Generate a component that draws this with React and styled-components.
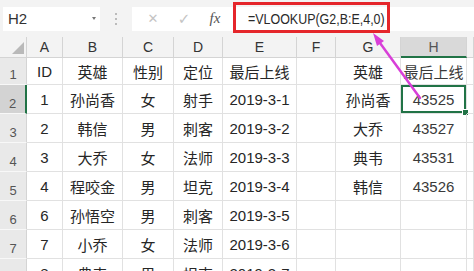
import styled, { createGlobalStyle } from "styled-components";

const GlobalStyle = createGlobalStyle`
  html, body {
    margin: 0;
    padding: 0;
    background: #ffffff;
  }
  body {
    font-family: "Liberation Sans", "Noto Sans CJK SC", sans-serif;
    color: #262626;
  }
`;

const columns = ["A", "B", "C", "D", "E", "F", "G", "H", ""];

const rows = [
  ["ID", "英雄", "性别", "定位", "最后上线", "", "英雄", "最后上线", ""],
  ["1", "孙尚香", "女", "射手", "2019-3-1", "", "孙尚香", "43525", ""],
  ["2", "韩信", "男", "刺客", "2019-3-2", "", "大乔", "43527", ""],
  ["3", "大乔", "女", "法师", "2019-3-3", "", "典韦", "43531", ""],
  ["4", "程咬金", "男", "坦克", "2019-3-4", "", "韩信", "43526", ""],
  ["6", "孙悟空", "男", "刺客", "2019-3-5", "", "", "", ""],
  ["7", "小乔", "女", "法师", "2019-3-6", "", "", "", ""],
  ["8", "典韦", "男", "坦克", "2019-3-7", "", "", "", ""],
];

const App = () => {
  return (
    <Page>
      <GlobalStyle />
      <Toolbar>
        <NameBox>
          H2
          <DropArrow />
        </NameBox>
        <Grip>
          <span />
          <span />
          <span />
        </Grip>
        <FxButtons>
          <ToolGlyph>✕</ToolGlyph>
          <ToolGlyph $size={15}>✓</ToolGlyph>
          <FxLabel>fx</FxLabel>
        </FxButtons>
        <FormulaInput>
          <FormulaText>=VLOOKUP(G2,B:E,4,0)</FormulaText>
        </FormulaInput>
      </Toolbar>

      <Sheet>
        <Corner>
          <CornerTriangle />
        </Corner>
        {columns.map((c, i) => (
          <ColHead key={"c" + i} $active={c === "H"}>
            {c}
          </ColHead>
        ))}
        {rows.map((row, r) => (
          <Row key={"r" + r}>
            <RowHead $active={r === 1}>{r + 1}</RowHead>
            {row.map((v, i) => (
              <Cell key={i} $selected={r === 1 && i === 7} $num={i === 7}>
                {v}
                {r === 1 && i === 7 && <FillHandle />}
              </Cell>
            ))}
          </Row>
        ))}
      </Sheet>

      <Highlight />
      <Arrow viewBox="0 0 474 271" width="474" height="271">
        <line x1="420" y1="98" x2="380" y2="43" stroke="#d83fd8" strokeWidth="2.5" strokeLinecap="round" />
        <polygon points="373,33 384,41 377,46" fill="#d83fd8" />
      </Arrow>
    </Page>
  );
};
export default App;

const Page = styled.div`
  position: relative;
  width: 474px;
  height: 271px;
  overflow: hidden;
  background: #ffffff;
`;

const Toolbar = styled.div`
  height: 37px;
  background: #f3f3f3;
  display: flex;
  align-items: center;
  padding-left: 3px;
  box-sizing: border-box;
`;

const NameBox = styled.div`
  width: 97px;
  height: 24px;
  background: #ffffff;
  box-sizing: border-box;
  display: flex;
  align-items: center;
  justify-content: space-between;
  padding: 0 4px 0 5px;
  font-size: 15px;
  color: #333333;
`;

const DropArrow = styled.span`
  width: 0;
  height: 0;
  border-left: 2px solid transparent;
  border-right: 2px solid transparent;
  border-top: 3px solid #777777;
`;

const Grip = styled.div`
  width: 32px;
  display: flex;
  flex-direction: column;
  align-items: center;
  gap: 3px;
  & > span {
    width: 2px;
    height: 2px;
    border-radius: 1px;
    background: #a8a8a8;
  }
`;

const FxButtons = styled.div`
  width: 102px;
  height: 24px;
  background: #ffffff;
  display: flex;
  align-items: center;
  justify-content: space-around;
  padding: 0 4px 0 6px;
  box-sizing: border-box;
`;

const ToolGlyph = styled.span`
  font-family: "DejaVu Sans", sans-serif;
  font-size: ${(p) => p.$size || 13}px;
  color: #c4c4c4;
`;

const FxLabel = styled.span`
  font-family: "Liberation Serif", serif;
  font-style: italic;
  font-size: 15px;
  color: #555555;
`;

const FormulaInput = styled.div`
  flex: 1;
  height: 24px;
  background: #ffffff;
  display: flex;
  align-items: center;
  padding-left: 14px;
  font-size: 15px;
  color: #2a2a2a;
  white-space: nowrap;
`;

const FormulaText = styled.span`
  display: inline-block;
  transform: scaleX(0.83);
  transform-origin: left center;
`;

const Sheet = styled.div`
  display: grid;
  grid-template-columns: 27px 36px 60px 51px 49px 74px 39px 65px 66px 1fr;
  grid-template-rows: 21px 27px;
  grid-auto-rows: 29px;
`;

const Row = styled.div`
  display: contents;
`;

const Corner = styled.div`
  background: #f3f3f3;
  border-right: 1px solid #d4d4d4;
  border-bottom: 1px solid #d4d4d4;
  box-sizing: border-box;
  display: flex;
  align-items: flex-end;
  justify-content: flex-end;
  padding: 0 2px 3px 0;
`;

const CornerTriangle = styled.span`
  width: 0;
  height: 0;
  border-left: 12px solid transparent;
  border-bottom: 12px solid #b9b9b9;
`;

const ColHead = styled.div`
  background: ${(p) => (p.$active ? "#d9d9d9" : "#f3f3f3")};
  border-right: 1px solid #d4d4d4;
  border-bottom: ${(p) => (p.$active ? "2px solid #217346" : "1px solid #d4d4d4")};
  box-sizing: border-box;
  display: flex;
  align-items: center;
  justify-content: center;
  font-size: 14px;
  color: ${(p) => (p.$active ? "#555555" : "#333333")};
`;

const RowHead = styled.div`
  background: ${(p) => (p.$active ? "#d3d3d3" : "#e9e9e9")};
  border-right: ${(p) => (p.$active ? "2px solid #217346" : "1px solid #d4d4d4")};
  border-bottom: 1px solid #f8f8f8;
  box-sizing: border-box;
  display: flex;
  align-items: flex-end;
  justify-content: center;
  padding-bottom: 2px;
  font-size: 13px;
  color: #555555;
`;

const Cell = styled.div`
  position: relative;
  border-right: 1px solid #e1e1e1;
  border-bottom: 1px solid #e1e1e1;
  box-sizing: border-box;
  display: flex;
  align-items: center;
  justify-content: center;
  padding-top: 1px;
  font-size: 15px;
  white-space: nowrap;
  color: ${(p) => (p.$num ? "#3a3a3a" : "#262626")};
  box-shadow: ${(p) => (p.$selected ? "inset 0 0 0 2px #217346" : "none")};
`;

const FillHandle = styled.span`
  position: absolute;
  right: -3px;
  bottom: -3px;
  width: 5px;
  height: 5px;
  background: #217346;
  border: 1px solid #ffffff;
`;

const Highlight = styled.div`
  position: absolute;
  left: 233px;
  top: 2px;
  width: 157px;
  height: 31px;
  border: 3px solid #e5262b;
  box-sizing: border-box;
  pointer-events: none;
`;

const Arrow = styled.svg`
  position: absolute;
  left: 0;
  top: 0;
  pointer-events: none;
`;
